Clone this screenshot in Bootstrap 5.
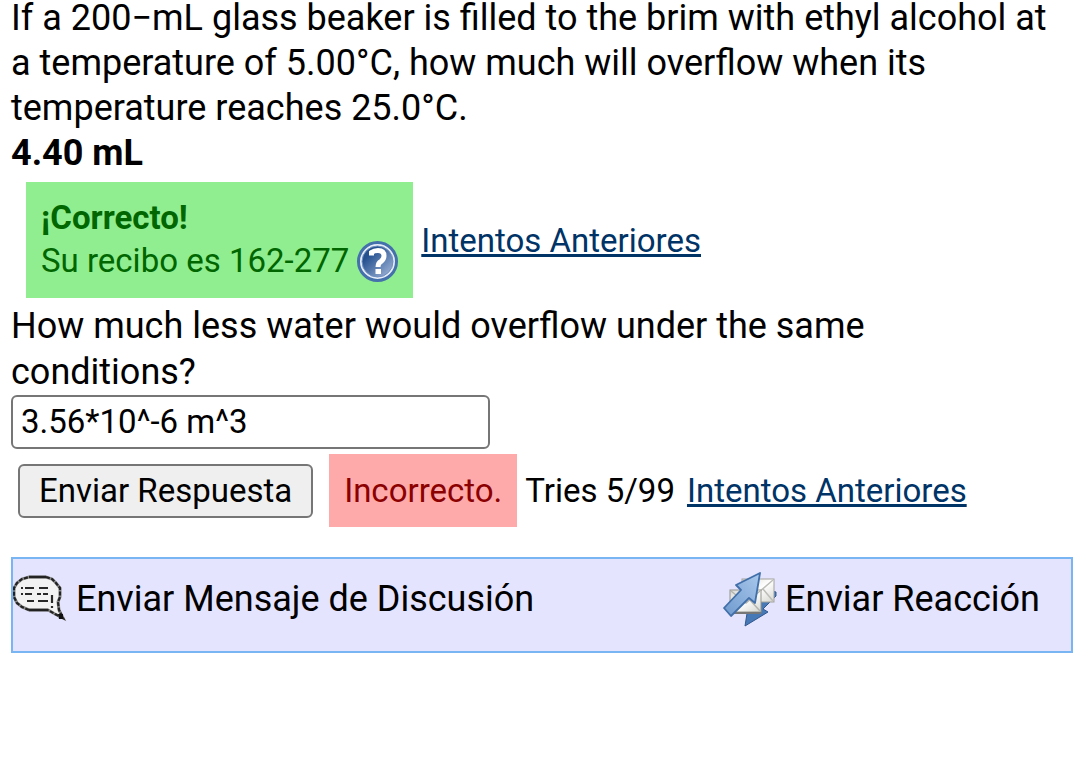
<!DOCTYPE html>
<html lang="es">
<head>
<meta charset="utf-8">
<meta name="viewport" content="width=device-width, initial-scale=1">
<title>Problema</title>
<link href="https://cdn.jsdelivr.net/npm/bootstrap@5.3.0/dist/css/bootstrap.min.css" rel="stylesheet">
<style>
body{font-family:Roboto,"Liberation Sans",sans-serif;font-size:36px;line-height:46px;color:#000;background:#fff}
.problem{padding:0 7px 0 11px}
.question{margin-top:-4px;line-height:45px}
.status-row{font-size:33px;line-height:43px;gap:8px}
.status-box{padding:15px}
.is-right{background:#90ee90;color:#060;padding:14px 15px 16px}
.is-wrong{background:#ffaaaa;color:#8b0000}
.correct-row{margin:6px 0 5px 15px}
.submit-row{margin:5px 0 30px 7px}
.status-row a{color:#036;text-decoration-thickness:3px}
.answer,.answer:focus{width:479px;height:54px;font-size:33px;line-height:40px;padding:0 8px 2px;border:2px solid #767676;border-radius:6px;color:#000;background:#fff}
.send,.send:hover{height:54px;font-size:33px;line-height:40px;padding:0 19px;border:2px solid #767676;border-radius:6px;color:#000;background:#efefef;margin-right:8px}
.feedback-bar{border:2px solid #78b5f2;background:#e4e4ff;padding:12px 0 24px;line-height:52px}
.feedback-bar a{color:#000}
.react{margin-right:31px}
svg{flex:none;display:block}
</style>
<script src="https://cdn.jsdelivr.net/npm/bootstrap@5.3.0/dist/js/bootstrap.bundle.min.js"></script>
</head>
<body>
<main class="problem">
  <p class="question mb-0">If a 200−mL glass beaker is filled to the brim with ethyl alcohol at a temperature of 5.00°C, how much will overflow when its temperature reaches 25.0°C.<br><strong>4.40 mL</strong></p>
  <div class="status-row correct-row d-flex flex-wrap align-items-center">
    <div class="status-box is-right">
      <strong class="d-block">¡Correcto!</strong>
      <div class="d-flex align-items-end gap-2">Su recibo es 162-277
        <a href="#help" aria-label="Ayuda"><svg width="41" height="41" viewBox="0 0 41 41">
          <defs><linearGradient id="disc" x1="0" y1="0" x2="1" y2="1"><stop offset=".25" stop-color="#24508f"/><stop offset="1" stop-color="#a9bddd"/></linearGradient></defs>
          <circle cx="20.500" cy="20.500" r="19" fill="#e6edf8" stroke="#4470ac" stroke-width="3"/>
          <circle cx="20.500" cy="20.500" r="15.500" fill="url(#disc)" stroke="#6f8fc0"/>
          <path d="M14.500 14.500V11.500Q17 9.500 21 9.500Q27 9.500 27 15Q27 18 24 20.500Q21 22 21 26" fill="none" stroke="#fff" stroke-width="5"/>
          <path d="M18.500 28h5.500v5h-5.500z" fill="#fff"/>
        </svg></a>
      </div>
    </div>
    <a href="#previous">Intentos Anteriores</a>
  </div>
  <form onsubmit="return false">
    <label class="d-block pe-4" for="answer">How much less water would overflow under the same conditions?</label>
    <input class="answer d-block mw-100" id="answer" type="text" value="3.56*10^-6 m^3">
    <div class="status-row submit-row d-flex flex-wrap align-items-center">
      <button class="send" type="submit">Enviar Respuesta</button>
      <div class="status-box is-wrong">Incorrecto.</div>
      <span>Tries 5/99</span>
      <a class="ms-1" href="#previous">Intentos Anteriores</a>
    </div>
  </form>
  <nav class="feedback-bar d-flex flex-wrap justify-content-between" aria-label="Comentarios">
    <a class="d-flex align-items-center gap-2 text-decoration-none" href="#discussion">
      <svg width="55" height="52" viewBox="0 0 55 52">
        <path d="M16 4H33L39 6L43 10L47 15V24L45 29L46 37L50 45L42 41L35 37H16L9 34L4 30L1 24V15L4 10L9 6Z" fill="#f2f2f2" stroke="#888" stroke-width="3"/>
        <path d="M16 4H33M16 37H35" fill="none" stroke="#222" stroke-width="2.400"/>
        <path d="M33 4L39 6L43 10L47 15V24L45 29L46 37L50 45L42 41L35 37M16 37L9 34L4 30L1 24V15L4 10L9 6L16 4" fill="none" stroke="#222" stroke-width="2.200" stroke-dasharray="4 1.500"/>
        <path d="M8 15h2M12 15h9M26 15h9M8 21h2M12 21h7M24 21h4M30 21h5M14 28h7M25 28h10M39 22v8M39 33v2" fill="none" stroke="#282828" stroke-width="2.200"/>
        <path d="M45 41h5v5h-4z" fill="#111"/>
      </svg>
      <span>Enviar Mensaje de Discusión</span>
    </a>
    <a class="react d-flex align-items-center gap-2 text-decoration-none" href="#feedback">
      <svg width="54" height="56" viewBox="0 0 54 56">
        <defs><linearGradient id="arrow" x1="0" y1="1" x2="1" y2="0"><stop offset="0" stop-color="#6f9ace"/><stop offset="1" stop-color="#a9c8ec"/></linearGradient>
        <linearGradient id="paper" x1="0" y1="0" x2="1" y2="1"><stop offset="0" stop-color="#d8d8d5"/><stop offset=".5" stop-color="#fff"/><stop offset="1" stop-color="#d5d5d0"/></linearGradient></defs>
        <path d="M22 55L25 36L30 40L48 20L53 21V25L40 38L45 41Z" fill="#4679b5" stroke="#31588e"/>
        <rect x="19" y="8" width="32" height="23" fill="url(#paper)" stroke="#a2a29e"/>
        <path d="M20 9l16 12L50 9M20 30l11-12M50 30L40 18" fill="none" stroke="#bdbdb8" stroke-width="1.500"/>
        <rect x="7" y="19" width="31" height="22" fill="url(#paper)" stroke="#94948f"/>
        <path d="M8 20l15 12L37 20M8 40l11-11M37 40L27 29" fill="none" stroke="#b4b4af" stroke-width="1.500"/>
        <path d="M8 42h30" stroke="#777" stroke-width="2"/>
        <path d="M37 2L13 14L18 19L1 37L8 45L26 27L32 32Z" fill="url(#arrow)" stroke="#416fa9" stroke-width="1.800" stroke-linejoin="round"/>
      </svg>
      <span>Enviar Reacción</span>
    </a>
  </nav>
</main>
</body>
</html>
